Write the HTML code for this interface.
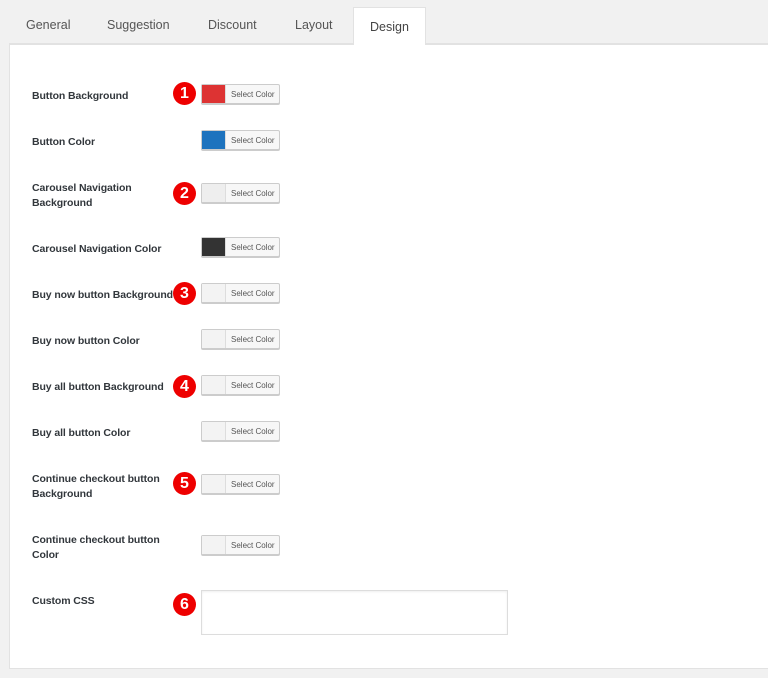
<!DOCTYPE html>
<html><head><meta charset="utf-8"><style>
*{box-sizing:border-box;margin:0;padding:0}
body{width:768px;height:678px;background:#f1f1f1;position:relative;font-family:"Liberation Sans",sans-serif;overflow:hidden}
.panel{position:absolute;left:9px;top:44px;width:759px;height:625px;background:#fff;border:1px solid #e2e2e2;border-right:none}
.tabbar{position:absolute;left:9px;top:0;width:759px;height:44px;border-bottom:1px solid #e2e2e2}
.tab{position:absolute;top:18px;font-size:12.5px;color:#555}
.tab.act{top:7px;left:353px;width:73px;height:38px;background:#fff;border:1px solid #e2e2e2;border-bottom:none;color:#444;text-align:center;padding-top:12px}
.lbl{position:absolute;left:32px;font-size:10.5px;font-weight:bold;color:#32373c;line-height:15px;letter-spacing:-0.1px}
.pk{position:absolute;left:201px;width:79px;height:20px;border:1px solid #ccc;border-radius:2px;background:#f7f7f7;box-shadow:0 1px 0 #ccc}
.pk .sw{position:absolute;left:0;top:0;width:24px;height:18px;border-right:1px solid #ddd}
.pk span{position:absolute;left:29px;top:5px;font-size:8px;color:#555}
.b{position:absolute;left:173px;width:23px;height:23px;border-radius:50%;background:#e00;color:#fff;font-weight:bold;font-size:16px;text-align:center;line-height:23px}
.ta{position:absolute;left:201px;top:590px;width:307px;height:45px;border:1px solid #ddd;box-shadow:inset 0 1px 2px rgba(0,0,0,.07)}
</style></head><body>
<div class="tabbar"></div>
<div class="panel"></div>
<div class="tab" style="left:26px">General</div>
<div class="tab" style="left:107px">Suggestion</div>
<div class="tab" style="left:208px">Discount</div>
<div class="tab" style="left:295px">Layout</div>
<div class="tab act">Design</div>

<div class="lbl" style="top:89px">Button Background</div>
<div class="lbl" style="top:135px">Button Color</div>
<div class="lbl" style="top:181px">Carousel Navigation<br>Background</div>
<div class="lbl" style="top:242px">Carousel Navigation Color</div>
<div class="lbl" style="top:288px">Buy now button Background</div>
<div class="lbl" style="top:334px">Buy now button Color</div>
<div class="lbl" style="top:380px">Buy all button Background</div>
<div class="lbl" style="top:426px">Buy all button Color</div>
<div class="lbl" style="top:472px">Continue checkout button<br>Background</div>
<div class="lbl" style="top:533px">Continue checkout button<br>Color</div>
<div class="lbl" style="top:594px">Custom CSS</div>

<div class="pk" style="top:84px"><div class="sw" style="background:#dd3333"></div><span>Select Color</span></div>
<div class="pk" style="top:130px"><div class="sw" style="background:#1e73be"></div><span>Select Color</span></div>
<div class="pk" style="top:183px"><div class="sw" style="background:#eee"></div><span>Select Color</span></div>
<div class="pk" style="top:237px"><div class="sw" style="background:#333"></div><span>Select Color</span></div>
<div class="pk" style="top:283px"><div class="sw" style="background:#f3f3f3"></div><span>Select Color</span></div>
<div class="pk" style="top:329px"><div class="sw" style="background:#f3f3f3"></div><span>Select Color</span></div>
<div class="pk" style="top:375px"><div class="sw" style="background:#f3f3f3"></div><span>Select Color</span></div>
<div class="pk" style="top:421px"><div class="sw" style="background:#f3f3f3"></div><span>Select Color</span></div>
<div class="pk" style="top:474px"><div class="sw" style="background:#f3f3f3"></div><span>Select Color</span></div>
<div class="pk" style="top:535px"><div class="sw" style="background:#f3f3f3"></div><span>Select Color</span></div>

<div class="b" style="top:82px">1</div>
<div class="b" style="top:182px">2</div>
<div class="b" style="top:282px">3</div>
<div class="b" style="top:375px">4</div>
<div class="b" style="top:472px">5</div>
<div class="b" style="top:593px">6</div>
<div class="ta"></div>
</body></html>
